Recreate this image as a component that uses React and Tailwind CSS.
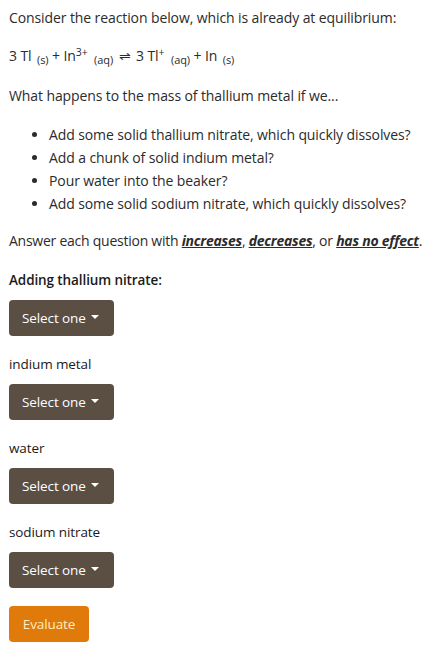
import React from 'react';

const items = [
  'Add some solid thallium nitrate, which quickly dissolves?',
  'Add a chunk of solid indium metal?',
  'Pour water into the beaker?',
  'Add some solid sodium nitrate, which quickly dissolves?',
];

const questions = ['Adding thallium nitrate:', 'indium metal', 'water', 'sodium nitrate'];

function SelectButton() {
  return (
    <button className="flex h-[36px] w-[105px] items-center rounded-[4px] bg-[#5b4e43] pl-[13px] text-[13.5px] text-white">
      Select one
      <span className="ml-[5px] mt-[-2px] h-0 w-0 border-x-[4px] border-t-[4px] border-x-transparent border-t-white" />
    </button>
  );
}

export default function App() {
  return (
    <div className="bg-white px-[9px] pt-[8px] text-[14px] tracking-[-0.1px] text-[#2b2b2b]" style={{ fontFamily: '"Open Sans", sans-serif' }}>
      <p className="leading-[20px]">Consider the reaction below, which is already at equilibrium:</p>

      <p className="mt-[18px] leading-[20px]">
        3 Tl <sub className="ml-[2px] text-[11px]">(s)</sub> + In<sup className="text-[10.5px]">3+</sup>{' '}
        <sub className="ml-[3px] text-[11px]">(aq)</sub> <span className="mx-[2px]">⇌</span> 3 Tl<sup className="text-[10.5px]">+</sup>{' '}
        <sub className="ml-[3px] text-[11px]">(aq)</sub> + In <sub className="ml-[2px] text-[11px]">(s)</sub>
      </p>

      <p className="mt-[20px] leading-[20px]">What happens to the mass of thallium metal if we...</p>

      <ul className="mt-[17px] list-disc pl-[40px] leading-[23px]">
        {items.map((item) => (
          <li key={item}>{item}</li>
        ))}
      </ul>

      <p className="mt-[16px] whitespace-nowrap leading-[20px] tracking-[-0.25px]">
        Answer each question with <b className="font-bold italic underline">increases</b>,{' '}
        <b className="font-bold italic underline">decreases</b>, or{' '}
        <b className="font-bold italic underline">has no effect</b>.
      </p>

      <div className="mt-[19px]">
        {questions.map((q, i) => (
          <div key={q} className={i === 0 ? '' : 'mt-[18px]'}>
            <p className={`leading-[20px] text-[13.5px] text-[#1a1a1a] ${i === 0 ? 'font-semibold' : 'font-medium'}`}>{q}</p>
            <div className="mt-[10px]">
              <SelectButton />
            </div>
          </div>
        ))}
      </div>

      <button className="mt-[18px] h-[36px] w-[80px] rounded-[4px] bg-[#e07a0b] text-[13.5px] text-[#fdeec0]">
        Evaluate
      </button>
    </div>
  );
}
